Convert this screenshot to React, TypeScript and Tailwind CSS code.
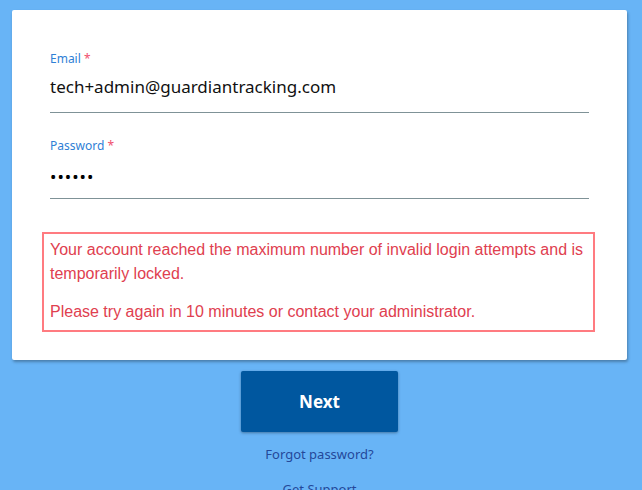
export default function App() {
  return (
    <div className="min-h-[490px] w-full bg-[#68b4f6] pt-[10px] pl-[12px] pr-[15px] font-['Noto_Sans',sans-serif]">
      {/* login card */}
      <div className="h-[350px] bg-white rounded-[2px] shadow-[1px_2px_3px_rgba(0,0,0,0.3)] pl-[38px] pr-[38px] pt-[41px]">
        <Field label="Email" value="tech+admin@guardiantracking.com" />
        <div className="h-[25px]" />
        <Field label="Password" value="••••••" password />

        <div className="ml-[-8px] mr-[-6px] mt-[33px] border-2 border-[#ff7b80] px-[6px] pt-[4px] pb-[6px] font-['Liberation_Sans',Arial,sans-serif] text-[16px] leading-[24px] text-[#e0404f]">
          <p>Your account reached the maximum number of invalid login attempts and is temporarily locked.</p>
          <p className="mt-[14px]">Please try again in 10 minutes or contact your administrator.</p>
        </div>
      </div>

      <div className="flex flex-col items-center pt-[11px]">
        <button className="w-[157px] h-[61px] rounded-[2px] bg-[#00579f] text-white font-bold text-[17px] shadow-[0_1px_3px_rgba(0,0,0,0.35)]">
          Next
        </button>
        <a className="mt-[13px] text-[13px] text-[#24489a]">Forgot password?</a>
        <a className="mt-[15px] text-[13px] text-[#24489a]">Get Support</a>
      </div>
    </div>
  );
}

function Field({ label, value, password }: { label: string; value: string; password?: boolean }) {
  return (
    <div className={password ? "border-b border-[#7f9297] pb-[7px]" : "border-b border-[#7f9297] pb-[11px]"}>
      <div className="text-[12px] leading-[16px] text-[#2f7fd6]">
        {label} <span className="text-[#f0506e]">*</span>
      </div>
      <div className={password ? "mt-[9px] text-[17px] leading-[28px] tracking-[1px] text-black" : "mt-[6px] text-[17px] leading-[28px] text-[#111]"}>
        {value}
      </div>
    </div>
  );
}
